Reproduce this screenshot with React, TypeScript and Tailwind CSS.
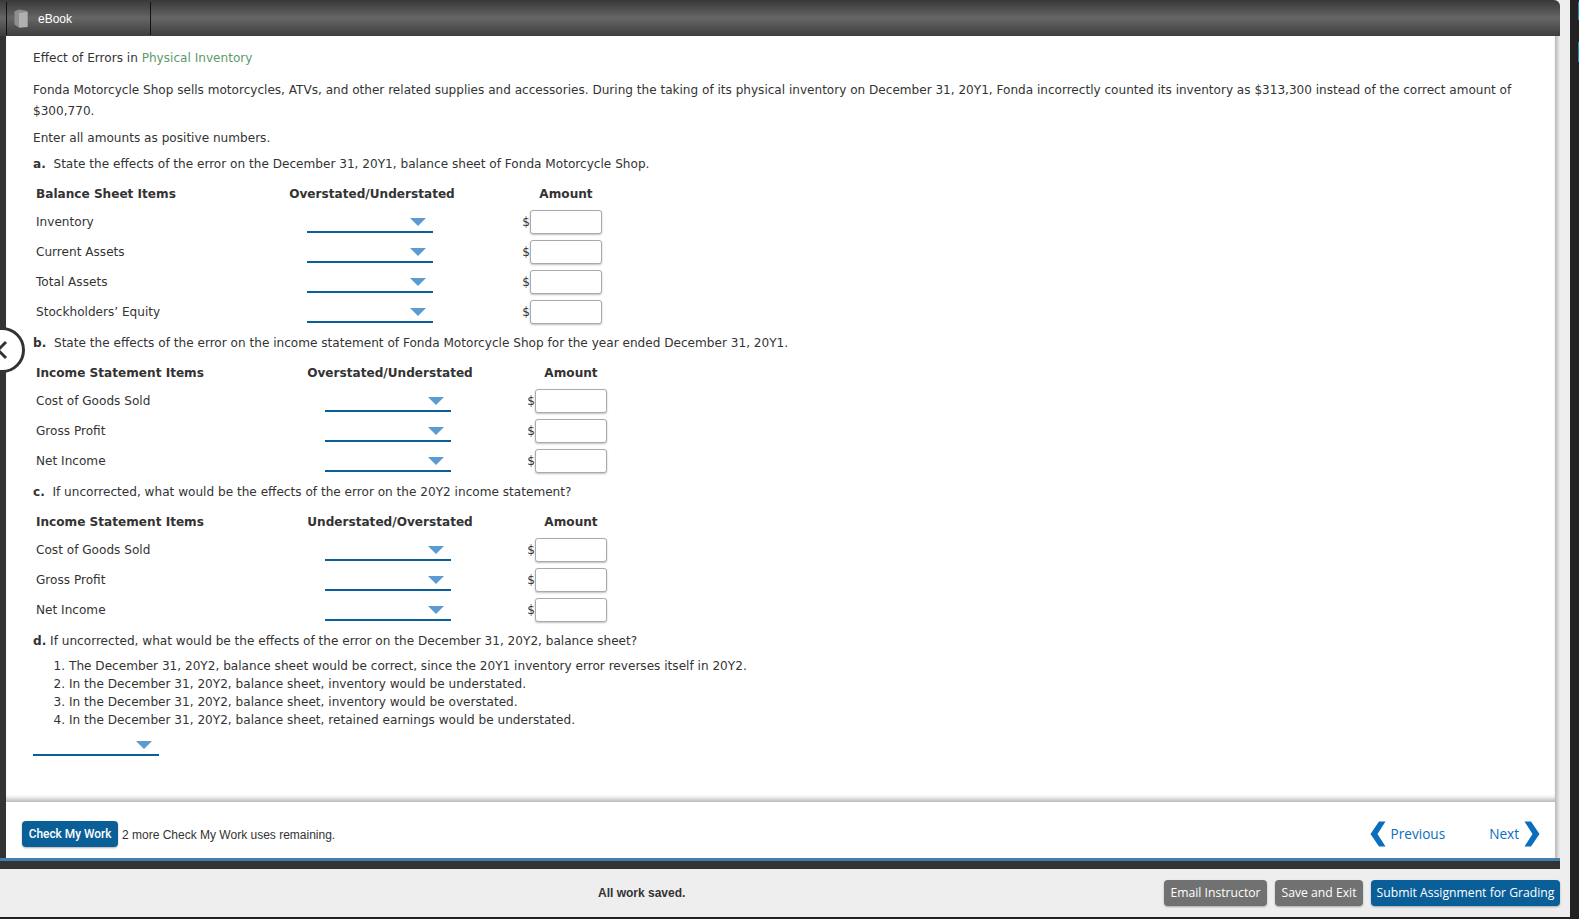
import React from 'react';

const sheetRows = ['Inventory', 'Current Assets', 'Total Assets', 'Stockholders\u2019 Equity'];
const incomeRows = ['Cost of Goods Sold', 'Gross Profit', 'Net Income'];

function Dropdown() {
  return (
    <div className="relative h-[24px] w-[126px] border-b-2 border-[#0b5f99]">
      <div className="absolute right-[7px] top-[9px] h-0 w-0 border-x-[8px] border-t-[8px] border-x-transparent border-t-[#5b9bd1]" />
    </div>
  );
}

function EntryTable({ items, label, heading, labelCol, amountCol }: { items: string[]; label: string; heading: string; labelCol: string; amountCol: string }) {
  return (
    <div className="pl-[3px]">
      <div className="flex h-[33px] items-center pt-[7px] font-bold">
        <div className={labelCol}>{label}</div>
        <div className="w-[172px] pl-[4px] text-center">{heading}</div>
        <div className={amountCol}>
          <div className="ml-auto w-[72px] text-center">Amount</div>
        </div>
      </div>
      {items.map((item) => (
        <div key={item} className="flex h-[30px] items-center">
          <div className={labelCol}>{item}</div>
          <div className="mb-[2px] flex w-[172px] justify-center"><Dropdown /></div>
          <div className={amountCol}>
            <div className="flex items-center justify-end text-[12px]">
              <span>$</span>
              <div className="h-[24px] w-[72px] rounded-[3px] border border-[#aaa] bg-white shadow-[0_1px_2px_rgba(0,0,0,0.25)]" />
            </div>
          </div>
        </div>
      ))}
    </div>
  );
}

export default function App() {
  return (
    <div className="flex h-[919px] overflow-hidden bg-[#222] font-['DejaVu_Sans',sans-serif] text-[12.1px] text-[#333]">
      <div className="relative flex h-full w-[1570px] flex-col bg-[#eee]">
        <div className="flex h-[36px] w-[1560px] shrink-0 items-center rounded-tr-[6px] bg-gradient-to-b from-[#383838] via-[#666] to-[#3e3e3e] pl-[6px]">
          <div className="flex h-[33px] w-[145px] items-center gap-[10px] border-x border-[#111] pl-[7px]">
            <svg width="14" height="19" viewBox="0 0 14 19" className="mt-[1px]">
              <path d="M0.5 2.5 L5 0.5 L13.5 2 V18 L5 18.5 L0.5 15.5 Z" fill="#8f8f8f" />
              <path d="M5 4 L13.5 3 V18 L5 18.5 Z" fill="#b0b0b0" />
            </svg>
            <span className="mt-[1px] font-['Liberation_Sans',sans-serif] text-[12px] text-white">eBook</span>
          </div>
        </div>

        <div className="flex min-h-0 w-[1560px] flex-1 bg-[#333]">
          <div className="w-[6px] shrink-0" />
          <div className="flex min-w-0 flex-1 flex-col">
            <div className="flex-1 bg-white pl-[27px] pr-[30px] pt-[12px] shadow-[inset_0_-6px_5px_-3px_rgba(0,0,0,0.3)]">
              <p className="leading-[20px]">Effect of Errors in <span className="text-[#5c9a6b]">Physical Inventory</span></p>
              <p className="mt-[12px] text-[12.07px] leading-[21px]">Fonda Motorcycle Shop sells motorcycles, ATVs, and other related supplies and accessories. During the taking of its physical inventory on December 31, 20Y1, Fonda incorrectly counted its inventory as $313,300 instead of the correct amount of $300,770.</p>
              <p className="mt-[6px] leading-[20px]">Enter all amounts as positive numbers.</p>
              <p className="mt-[6px] leading-[20px]"><b>a.</b>&nbsp; State the effects of the error on the December 31, 20Y1, balance sheet of Fonda Motorcycle Shop.</p>
              <EntryTable items={sheetRows} label="Balance Sheet Items" heading="Overstated/Understated" labelCol="w-[248px]" amountCol="w-[146px]" />
              <p className="mt-[6px] leading-[20px]"><b>b.</b>&nbsp; State the effects of the error on the income statement of Fonda Motorcycle Shop for the year ended December 31, 20Y1.</p>
              <EntryTable items={incomeRows} label="Income Statement Items" heading="Overstated/Understated" labelCol="w-[266px]" amountCol="w-[133px]" />
              <p className="mt-[6px] leading-[20px]"><b>c.</b>&nbsp; If uncorrected, what would be the effects of the error on the 20Y2 income statement?</p>
              <EntryTable items={incomeRows} label="Income Statement Items" heading="Understated/Overstated" labelCol="w-[266px]" amountCol="w-[133px]" />
              <p className="mt-[6px] leading-[20px]"><b>d.</b> If uncorrected, what would be the effects of the error on the December 31, 20Y2, balance sheet?</p>
              <ol className="mt-[6px] list-decimal pl-[36px] leading-[18px]">
                <li>The December 31, 20Y2, balance sheet would be correct, since the 20Y1 inventory error reverses itself in 20Y2.</li>
                <li>In the December 31, 20Y2, balance sheet, inventory would be understated.</li>
                <li>In the December 31, 20Y2, balance sheet, inventory would be overstated.</li>
                <li>In the December 31, 20Y2, balance sheet, retained earnings would be understated.</li>
              </ol>
              <div className="mt-[3px]"><Dropdown /></div>
            </div>
            <div className="flex h-[56px] shrink-0 items-center justify-between bg-white pl-[16px] pr-[15px] pt-[8px]">
              <div className="flex items-center gap-[4px]">
                <button className="h-[26px] w-[96px] whitespace-nowrap rounded-[4px] bg-[#0b5f99] pt-[1px] font-['Roboto',sans-serif] text-[11.9px] font-medium text-white shadow-[0_1px_2px_rgba(0,0,0,0.3)]">Check My Work</button>
                <span className="pt-[1px] font-['Liberation_Sans',sans-serif] text-[12px]">2 more Check My Work uses remaining.</span>
              </div>
              <div className="flex items-center font-['Open_Sans',sans-serif] text-[13.6px] text-[#0a6ebd]">
                <svg width="16" height="26" viewBox="0 0 16 26"><path d="M9 0.5 L0.5 13 L9 25.5 H15.5 L7.5 13 L15.5 0.5 Z" fill="#0a6ebd" /></svg>
                <span className="ml-[5px]">Previous</span>
                <span className="ml-[44px]">Next</span>
                <svg width="16" height="26" viewBox="0 0 16 26" className="ml-[5px]"><path d="M7 0.5 L15.5 13 L7 25.5 H0.5 L8.5 13 L0.5 0.5 Z" fill="#0a6ebd" /></svg>
              </div>
            </div>
          </div>
          <div className="w-[5px] shrink-0 bg-gradient-to-r from-[#b8b8b8] to-[#eee]" />
        </div>

        <div className="h-[3px] w-[1560px] shrink-0 bg-[#3f7fb0]" />
        <div className="h-[8px] w-[1560px] shrink-0 bg-[#333]" />
        <div className="relative flex h-[48px] shrink-0 items-center justify-end pr-[10px]">
          <span className="absolute left-[598px] -mt-[1px] font-['Liberation_Sans',sans-serif] text-[12px] font-bold">All work saved.</span>
          <div className="flex gap-[8px] whitespace-nowrap font-['Open_Sans',sans-serif] text-[12.2px] text-white">
            <button className="h-[26px] w-[103px] rounded-[4px] bg-[#717171] shadow-[0_1px_2px_rgba(0,0,0,0.3)]">Email Instructor</button>
            <button className="h-[26px] w-[88px] rounded-[4px] bg-[#717171] shadow-[0_1px_2px_rgba(0,0,0,0.3)]">Save and Exit</button>
            <button className="h-[26px] w-[189px] rounded-[4px] bg-[#0b5f99] shadow-[0_1px_2px_rgba(0,0,0,0.3)]">Submit Assignment for Grading</button>
          </div>
        </div>
        <div className="h-[2px] shrink-0 bg-[#222]" />

        {/* side tab toggle over the left edge */}
        <div className="absolute left-[-21px] top-[327px] flex h-[46px] w-[46px] items-center justify-end rounded-full border-[3px] border-[#333] bg-white pr-[14px]">
          <svg width="12" height="20" viewBox="0 0 12 20"><path d="M10 2 L2 10 L10 18" stroke="#333" strokeWidth="3" fill="none" /></svg>
        </div>
      </div>
      {/* edge of the next window */}
      <div className="flex w-[9px] flex-col items-end pt-[2px]">
        <div className="h-[18px] w-[1px] bg-[#1a8fc0]" />
        <div className="mt-[22px] h-[20px] w-[1px] bg-[#1a8fc0]" />
      </div>
    </div>
  );
}
